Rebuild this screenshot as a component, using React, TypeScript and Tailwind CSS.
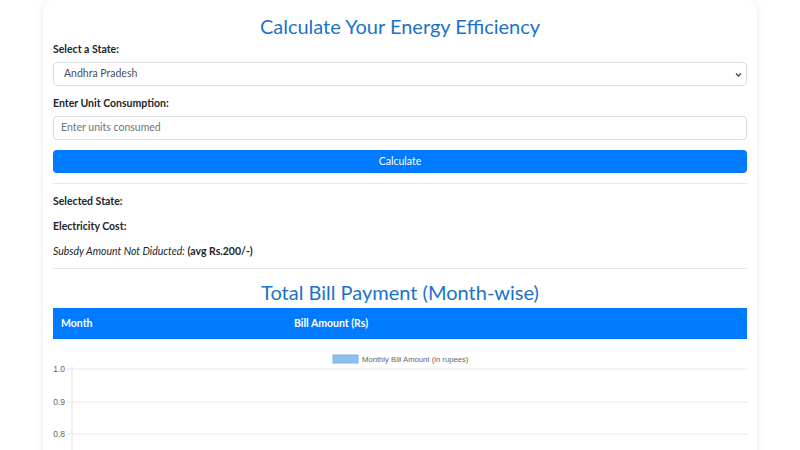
import React from "react";

const ticks = [
  { label: "1.0", y: 17 },
  { label: "0.9", y: 50 },
  { label: "0.8", y: 82 },
];

const BillChart = () => {
  return (
    <div className="relative h-[110px] w-full">
      <svg className="absolute inset-0 h-full w-full" viewBox="0 0 694 110" preserveAspectRatio="none">
        <rect x="280" y="3" width="25" height="8" fill="#8cc0f0" stroke="#75b3ec" strokeWidth="1" />
        <text x="309" y="10" fontSize="7.7" fill="#666" fontFamily="'Liberation Sans', Arial, sans-serif">
          Monthly Bill Amount (in rupees)
        </text>
        <line x1="19" y1="14" x2="19" y2="110" stroke="#e5e5e5" strokeWidth="1" />
        {ticks.map((t) => (
          <g key={t.label}>
            <line x1="14" y1={t.y} x2="694" y2={t.y} stroke="#e8e8e8" strokeWidth="1" />
            <text x="12" y={t.y + 3} fontSize="8.5" fill="#666" textAnchor="end" fontFamily="'Liberation Sans', Arial, sans-serif">
              {t.label}
            </text>
          </g>
        ))}
      </svg>
    </div>
  );
};

export default function App() {
  return (
    <div className="min-h-[450px] w-full bg-white font-['Lato','Noto_Sans',sans-serif] text-[10.5px] text-[#212529]">
      <div className="mx-auto w-[714px] rounded-t-[10px] bg-white px-[10px] pt-[11px] shadow-[0_0_8px_rgba(0,0,0,0.08)]">
        <h2 className="text-center text-[20px] leading-[30px] text-[#1a73c8]">Calculate Your Energy Efficiency</h2>

        <label className="block font-bold leading-[16px]">Select a State:</label>
        <div className="relative mt-[5px] flex h-[24px] items-center rounded-[4px] border border-[#dcdfe3] pl-[10px]">
          <span className="text-[#495057]">Andhra Pradesh</span>
          <svg className="absolute right-[4px] top-[9px] h-[6px] w-[7px]" viewBox="0 0 7 6">
            <path d="M1 1.5 L3.5 4 L6 1.5" fill="none" stroke="#444" strokeWidth="1.3" />
          </svg>
        </div>

        <label className="mt-[9px] block font-bold leading-[16px]">Enter Unit Consumption:</label>
        <div className="mt-[5px] flex h-[24px] items-center rounded-[4px] border border-[#dcdfe3] px-[7px]">
          <span className="text-[#6c757d]">Enter units consumed</span>
        </div>

        <button className="mt-[10px] flex h-[23px] w-full items-center justify-center rounded-[4px] bg-[#007bff] text-white">
          Calculate
        </button>

        <hr className="mt-[10px] border-t border-[#e6e8eb]" />

        <div className="mt-[9px] font-bold leading-[16px]">Selected State:</div>
        <div className="mt-[9px] font-bold leading-[16px]">Electricity Cost:</div>
        <div className="mt-[9px] leading-[16px]">
          <i>Subsdy Amount Not Diducted:</i> <b>(avg Rs.200/-)</b>
        </div>

        <hr className="mt-[9px] border-t border-[#e6e8eb]" />

        <h2 className="mt-[7px] text-center text-[20px] leading-[32px] text-[#1a73c8]">Total Bill Payment (Month-wise)</h2>

        <div className="grid h-[31px] grid-cols-[233px_1fr] items-center bg-[#007bff] px-[8px] font-bold text-white">
          <span>Month</span>
          <span>Bill Amount (Rs)</span>
        </div>

        <div className="mt-[13px]">
          <BillChart />
        </div>
      </div>
    </div>
  );
}
